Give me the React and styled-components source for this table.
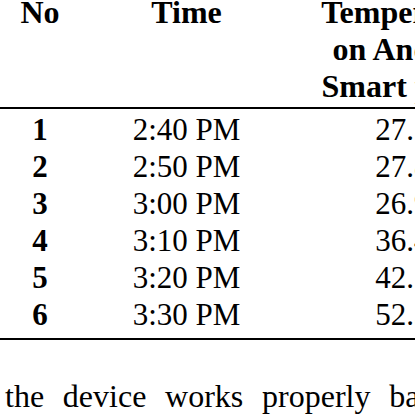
import React from "react";
import styled, { createGlobalStyle } from "styled-components";

const Global = createGlobalStyle`
  html, body {
    margin: 0;
    padding: 0;
    background: #ffffff;
    overflow: hidden;
  }
  body {
    font-family: "Liberation Serif", "Times New Roman", serif;
    color: #000;
  }
`;

const Page = styled.div`
  width: 415px;
  height: 415px;
  overflow: hidden;
  position: relative;
`;

const Table = styled.table`
  border-collapse: collapse;
  margin-top: -6px;
  width: 527px;
  table-layout: fixed;
  font-size: 31px;
  line-height: 37px;
`;

const HeadCell = styled.th`
  font-weight: bold;
  font-size: 32px;
  text-align: center;
  vertical-align: top;
  padding: 0 0 2px 0;
  border-bottom: 2px solid #000;
  width: ${(p) => p.$w}px;
`;

const Cell = styled.td`
  text-align: center;
  padding: ${(p) => (p.$first ? "2px" : "0")} 0 ${(p) => (p.$last ? "5px" : "0")} 0;
  font-weight: ${(p) => (p.$bold ? "bold" : "normal")};
  border-bottom: ${(p) => (p.$last ? "2px solid #000" : "none")};
  white-space: nowrap;
`;

const Para = styled.p`
  margin: 38px 0 0 0;
  padding-left: 5px;
  font-size: 32px;
  line-height: 37px;
  word-spacing: 10.75px;
  white-space: nowrap;
`;

const rows = [
  ["1", "2:40 PM", "27.53"],
  ["2", "2:50 PM", "27.81"],
  ["3", "3:00 PM", "26.94"],
  ["4", "3:10 PM", "36.42"],
  ["5", "3:20 PM", "42.75"],
  ["6", "3:30 PM", "52.31"],
];

export default function App() {
  return (
    <Page>
      <Global />
      <Table>
        <thead>
          <tr>
            <HeadCell $w={80}>No</HeadCell>
            <HeadCell $w={213}>Time</HeadCell>
            <HeadCell $w={234}>
              Temperature
              <br />
              on Android
              <br />
              Smart phone
            </HeadCell>
          </tr>
        </thead>
        <tbody>
          {rows.map((r, i) => (
            <tr key={r[0]}>
              <Cell $bold $first={i === 0} $last={i === rows.length - 1}>
                {r[0]}
              </Cell>
              <Cell $first={i === 0} $last={i === rows.length - 1}>
                {r[1]}
              </Cell>
              <Cell $first={i === 0} $last={i === rows.length - 1}>
                {r[2]}
              </Cell>
            </tr>
          ))}
        </tbody>
      </Table>
      <Para>the device works properly based on the results</Para>
    </Page>
  );
}
